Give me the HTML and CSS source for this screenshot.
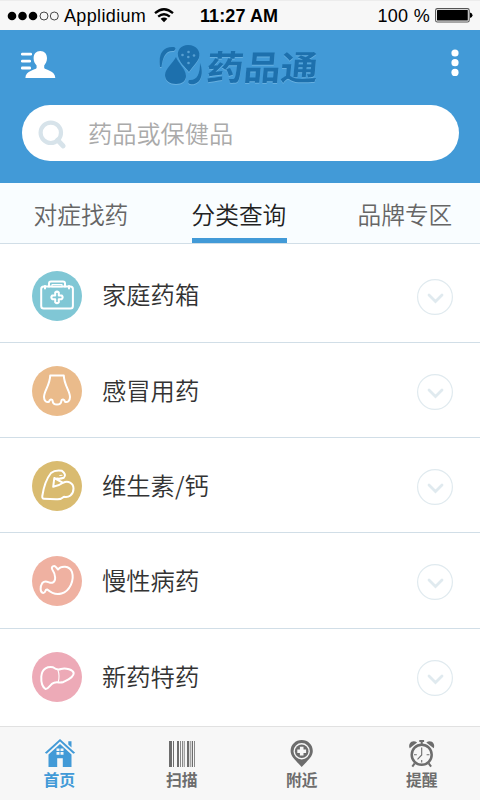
FILE: index.html
```html
<!DOCTYPE html>
<html lang="zh-CN">
<head>
<meta charset="utf-8">
<title>药品通</title>
<link rel="stylesheet" href="styles.css">
</head>
<body>
<div class="status">
  <svg class="signal" width="52" height="12" viewBox="0 0 52 12"><g fill="#000"><circle cx="5" cy="6" r="4.3"/><circle cx="15.5" cy="6" r="4.3"/><circle cx="26" cy="6" r="4.3"/></g><g fill="none" stroke="#333" stroke-width=".9"><circle cx="37" cy="6" r="4"/><circle cx="47.3" cy="6" r="4"/></g></svg>
  <span class="carrier">Applidium</span>
  <svg class="wifi" width="20" height="15" viewBox="0 0 20 15"><g fill="none" stroke="#000" stroke-width="2.3"><path d="M1 5.2Q10-2.6 19 5.2"/><path d="M4.2 8.7Q10 3.7 15.8 8.7"/></g><path d="M6.6 10.8Q10 8 13.4 10.8L10 14.2Z"/></svg>
  <span class="time">11:27 AM</span>
  <span class="percent">100 %</span>
  <svg class="battery" width="38" height="15" viewBox="0 0 38 15"><rect x=".6" y=".6" width="33.6" height="13.4" rx="1.8" fill="#fff" stroke="#555" stroke-width="1.1"/><rect x="2" y="2" width="30.8" height="10.6" rx=".5"/><path d="M35 4.5Q37.5 5 37.5 7.3T35 10Z"/></svg>
</div>
<header class="header">
  <div class="bar">
    <svg class="contact" width="36" height="28" viewBox="0 0 36 28"><g fill="#fff"><rect x="0" y="1.7" width="11" height="2.8" rx="1.2"/><rect x="0" y="8.7" width="10" height="2.8" rx="1.2"/><rect x="0" y="15.6" width="10" height="2.8" rx="1.2"/><path d="M19.3 0C23.5 0 26 3 26 7.2C26 10.5 24.5 12.5 23.2 14.6V17C24 19 34.3 19.5 34.3 27H4.4C4.4 19.5 14.8 19 15.6 17V14.6C14 12.5 12.6 10.5 12.6 7.2C12.6 3 15.1 0 19.3 0Z"/></g></svg>
    <div class="logo">
      <svg width="47" height="44" viewBox="0 0 47 44">
        <g fill="#1d70ad">
          <path d="M1 24C-1 11 4 3 15 4Q18 5 15 8C7 7 4 13 2.5 24Z"/>
          <path d="M29 2C38 2 42 9 40 15C38 20 33 24 30 29C26 24 20 19 19 13C18 7 22 2 29 2Z"/>
          <path d="M17 14C19 20 27 26 27 33C27 38 23 41 17 41S6 38 6 32C6 26 14 20 17 14Z"/>
          <path d="M41 20C46 33 40 43 31 41Q28 40 30 37C38 38 41 31 41 20Z"/>
        </g>
        <g fill="#58a0d2"><circle cx="29.5" cy="9" r="1.3"/><circle cx="23.5" cy="12" r="1.3"/><circle cx="29.3" cy="14" r="1.3"/><circle cx="35" cy="12.5" r="1.3"/><circle cx="29.5" cy="20" r="1.3"/></g>
      </svg>
      <span class="wordmark">药品通</span>
    </div>
    <svg class="more" width="8" height="28" viewBox="0 0 8 28"><g fill="#fff"><circle cx="4" cy="4" r="3.6"/><circle cx="4" cy="13.7" r="3.6"/><circle cx="4" cy="23.4" r="3.6"/></g></svg>
  </div>
  <div class="search">
    <svg width="30" height="30" viewBox="0 0 30 30"><g fill="none" stroke="#d7e3ea"><circle cx="13.8" cy="12.8" r="10.2" stroke-width="4.2"/><path d="M20.5 20L26.2 26" stroke-width="4.8" stroke-linecap="round"/></g></svg>
    <span>药品或保健品</span>
  </div>
</header>
<nav class="tabs">
  <span class="tab">对症找药</span>
  <span class="tab active">分类查询</span>
  <span class="tab">品牌专区</span>
</nav>
<main class="list">
  <div class="row first">
    <svg class="icon teal" viewBox="0 0 50 50"><rect x="9.2" y="15.5" width="31.7" height="22" rx="2.5"/><path d="M13 15V17.5M37 15V17.5M17 15.5V12.5Q17 10.5 19 10.5H31Q33 10.5 33 12.5V15.5"/><path class="thin" d="M20 15.8V13.5H30V15.8Z"/><path d="M23.2 21.5Q25 19.8 26.8 21.5V24.5H29.8Q31.5 26.3 29.8 28.2H26.8V31.2Q25 33 23.2 31.2V28.2H20.2Q18.5 26.3 20.2 24.5H23.2Z"/></svg>
    <span class="label">家庭药箱</span>
    <svg class="chevron" viewBox="0 0 38 38"><circle cx="19" cy="19" r="17.4"/><path d="M13 17L19.5 23.5L26 17"/></svg>
  </div>
  <div class="row">
    <svg class="icon orange" viewBox="0 0 50 50"><path d="M18.2 9.5H31.8C32 19 38 25 38 31C38 35 35.5 36.5 33 35.8C32.5 33.3 29.8 32.5 29.3 35.3C28.8 39.5 21.2 39.5 20.7 35.3C20.2 32.5 17.5 33.3 17 35.8C14.5 36.5 12 35 12 31C12 25 18 19 18.2 9.5Z"/></svg>
    <span class="label">感冒用药</span>
    <svg class="chevron" viewBox="0 0 38 38"><circle cx="19" cy="19" r="17.4"/><path d="M13 17L19.5 23.5L26 17"/></svg>
  </div>
  <div class="row">
    <svg class="icon gold" viewBox="0 0 50 50"><path d="M21.2 25.8L22.3 17L31 21.8Q27 24.8 21.2 25.8M31 21.8C36 19 41.5 22 41.5 27.5C41.5 34 36.5 37 32 35.8Q28.5 39 24 38.2L12 37.8Q10 37.8 10.3 35C11.5 27 15 17 19 12C22 9.5 26 9.2 30 9.8C33 11.8 34 15 31.8 16.8Q28.5 18 25 17.5"/><path class="thin" d="M27.8 14.5L30 14.3"/></svg>
    <span class="label">维生素/钙</span>
    <svg class="chevron" viewBox="0 0 38 38"><circle cx="19" cy="19" r="17.4"/><path d="M13 17L19.5 23.5L26 17"/></svg>
  </div>
  <div class="row">
    <svg class="icon coral" viewBox="0 0 50 50"><path d="M20.3 13.5C18.5 10.5 22.5 8.8 24 11.2L26 13.5C29 9.5 37.5 9.2 40 16C42.5 24 38 35 29.5 37.5C23 39.3 19 36.8 15.3 33.5C12.5 33 14.3 37 11.3 37C7.5 36.5 8.3 30 10.3 27C14 23 16.5 27.5 20.2 26.8C24.5 25.5 23.7 18.5 20.3 13.5Z"/></svg>
    <span class="label">慢性病药</span>
    <svg class="chevron" viewBox="0 0 38 38"><circle cx="19" cy="19" r="17.4"/><path d="M13 17L19.5 23.5L26 17"/></svg>
  </div>
  <div class="row last">
    <svg class="icon pink" viewBox="0 0 50 50"><path d="M13.5 37C10.5 35 9 30 9.3 24.5C10 16 16 14.5 21 15.3Q25 18.5 29 17C34 15.5 41 18 41.7 21C42 25.5 34.5 28.5 31.5 30C27.5 31.5 26 29.5 22 30.8C18 32 16.5 37.5 13.5 37Z"/><path class="thin" d="M25.8 17.5Q28 24 26.2 30.2"/></svg>
    <span class="label">新药特药</span>
    <svg class="chevron" viewBox="0 0 38 38"><circle cx="19" cy="19" r="17.4"/><path d="M13 17L19.5 23.5L26 17"/></svg>
  </div>
</main>
<footer class="nav">
  <div class="item home">
    <svg viewBox="0 0 32 30"><path d="M24.3 3.2H27.5V9.5L24.3 6.5ZM.8 14.8L16 1L31.2 14.8L29.3 15.7L16 3.6L2.7 15.7ZM4.5 16.5L16 6.1L27.5 16.5V29H18.8V20.2H13.2V29H4.5Z"/><path fill="#f7f7f7" d="M12.5 10.4H15.5V13H12.5ZM16.5 10.4H19.5V13H16.5ZM12.5 14H15.5V16.7H12.5ZM16.5 14H19.5V16.7H16.5Z"/></svg>
    <span>首页</span>
  </div>
  <div class="item">
    <svg viewBox="0 0 32 30"><path d="M3 3H6V29H3ZM7 3H8V29H7ZM11 3H13V29H11ZM14 3H14.8V29H14ZM16 3H16.8V29H16ZM17.8 3H18.6V29H17.8ZM21 3H23V29H21ZM23.8 3H24.6V29H23.8ZM25.8 3H27V29H25.8ZM28.2 3H29V29H28.2Z"/></svg>
    <span>扫描</span>
  </div>
  <div class="item">
    <svg viewBox="0 0 32 30"><path fill-rule="evenodd" d="M15.7 2C22 2 26.8 6.7 26.8 13C26.8 19 20.5 23.5 15.7 29C11 23.5 4.6 19 4.6 13C4.6 6.7 9.4 2 15.7 2ZM15.7 5A8.2 8.2 0 1 0 15.7 21.4A8.2 8.2 0 1 0 15.7 5Z"/><circle cx="15.7" cy="13.2" r="6.8"/><path fill="#f7f7f7" d="M13.9 8.8H17.5V11.4H20.1V15H17.5V17.6H13.9V15H11.3V11.4H13.9Z"/></svg>
    <span>附近</span>
  </div>
  <div class="item">
    <svg viewBox="0 0 32 30"><g fill="none" stroke="#6d6d6d"><circle cx="15.7" cy="16.8" r="10" stroke-width="2.5"/><path d="M15.7 3.5V7M13.3 3H18.1M8.7 25.3L6.3 28.6M22.7 25.3L25.1 28.6" stroke-width="2"/><path d="M15.7 9.5V17L11.5 21.3M8 16.8H10.8M20.6 16.8H23.4M15.7 22V24.5" stroke-width="1.1"/></g><path d="M3.7 10.3C1.5 5.5 6.5.8 11.1 4.4ZM27.7 10.3C29.9 5.5 24.9.8 20.3 4.4Z"/></svg>
    <span>提醒</span>
  </div>
</footer>
</body>
</html>
```

FILE: styles.css
```css
* { box-sizing: border-box; }
body {
  margin: 0;
  width: 480px;
  height: 800px;
  display: flex;
  flex-direction: column;
  overflow: hidden;
  background: #fff;
  font-family: "Liberation Sans", "Noto Sans CJK SC", sans-serif;
}
svg { display: block; flex: none; }
.status {
  height: 30px;
  flex: none;
  display: flex;
  align-items: center;
  padding: 0 7px 0;
  background: #f7f7f7;
  border-top: 1px solid #ececec;
  color: #000;
  font-size: 18px;
  line-height: 28px;
  white-space: nowrap;
}
.carrier { width: 82px; margin-left: 5px; letter-spacing: .35px; }
.wifi { margin-left: 8px; }
.time { width: 79px; margin-left: 26px; font-weight: bold; letter-spacing: .1px; }
.percent { margin-left: auto; letter-spacing: .3px; }
.battery { margin-left: 5px; }
.header { height: 153px; flex: none; background: #429ad7; }
.bar {
  height: 75px;
  display: flex;
  align-items: flex-start;
  padding: 13px 21px 0;
}
.contact { margin-top: 8px; }
.logo {
  display: flex;
  margin-left: 102px;
  filter: drop-shadow(0 1px 0 #66afe0);
}
.wordmark {
  font-family: "Noto Sans CJK SC", sans-serif;
  font-size: 34px;
  font-weight: 700;
  line-height: 50px;
  white-space: nowrap;
  color: #1d70ad;
  margin-top: -2px;
  transform-origin: 0 36px;
  transform: skewX(-5deg) scaleX(1.09);
}
.more { margin: 6px 0 0 auto; }
.search {
  width: 437px;
  height: 56px;
  margin-left: 22px;
  padding: 0 0 2px 15px;
  display: flex;
  align-items: center;
  gap: 21px;
  border-radius: 28px;
  background: #fff;
  color: #aaa;
  font-family: "Noto Sans CJK SC", sans-serif;
  font-weight: 350;
  font-size: 24.2px;
}
.search svg { margin-top: 5px; }
.tabs {
  height: 61px;
  flex: none;
  display: flex;
  gap: 63px;
  padding: 0 0 0 33.5px;
  background: #f9fdff;
  border-bottom: 1px solid #d1dee7;
  font-family: "Noto Sans CJK SC", sans-serif;
  font-weight: 350;
  font-size: 23.7px;
  line-height: 62px;
  color: #666;
}
.tab { width: 95px; height: 60px; white-space: nowrap; }
.tab.active { color: #222; border-bottom: 5px solid #429ad7; margin-right: 8px; }
.list { flex: none; }
.row {
  height: 95px;
  display: flex;
  align-items: flex-start;
  padding: 23px 26px 0 32px;
  border-bottom: 1px solid #d1dee7;
}
.row.first { height: 99px; padding-top: 27px; }
.row:nth-child(4) { height: 96px; }
.row.last { height: 97px; border: 0; }
.icon {
  width: 50px;
  height: 50px;
  border-radius: 50%;
  fill: none;
  stroke: #fff;
  stroke-width: 2;
  stroke-linecap: round;
  stroke-linejoin: round;
}
.icon .thin { stroke-width: 1.1; }
.teal { background: #80c7d5; }
.orange { background: #eabb8b; }
.gold { background: #d9bb70; }
.coral { background: #efb1a1; }
.pink { background: #edaab7; }
.label {
  margin-left: 20px;
  font-family: "Noto Sans CJK SC", sans-serif;
  font-size: 24.3px;
  font-weight: 350;
  line-height: 47px;
  color: #333;
}
.first .label { line-height: 46px; }
.chevron {
  width: 38px;
  height: 38px;
  margin: 7px 0 0 auto;
  fill: none;
  stroke: #e0eaef;
  stroke-width: 1.2;
}
.chevron path { stroke-width: 2.8; stroke-linecap: round; }
.nav {
  height: 74px;
  flex: none;
  display: flex;
  gap: 88px;
  padding: 11px 0 0 43.5px;
  background: #f7f7f7;
  border-top: 1px solid #e1e1e1;
  color: #6d6d6d;
  font-family: "Noto Sans CJK SC", sans-serif;
  font-weight: 700;
  font-size: 15.8px;
  line-height: 23px;
}
.item { width: 32px; fill: #6d6d6d; white-space: nowrap; }
.item svg { width: 32px; height: 30px; }
.home { margin-right: 2.5px; color: #429ad7; fill: #429ad7; }
```
